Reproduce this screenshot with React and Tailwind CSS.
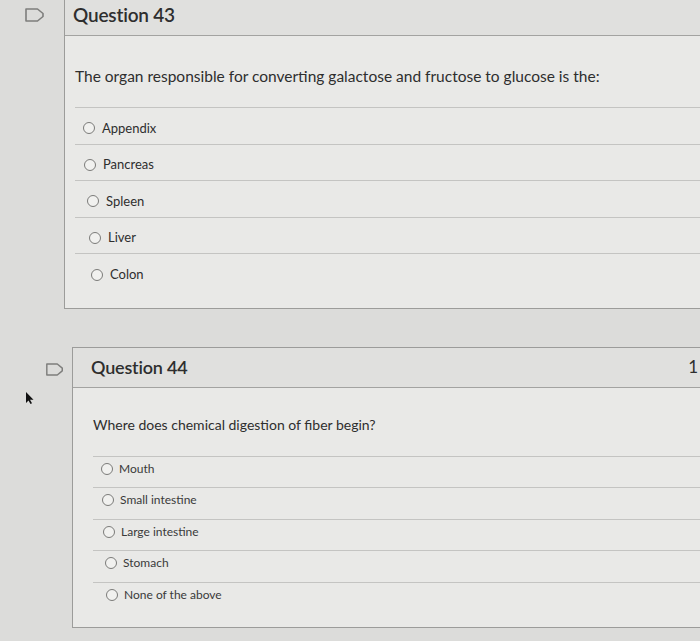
import React from 'react';

const Flag = ({ className }) => (
  <svg viewBox="0 0 22 16" className={className} fill="none">
    <path d="M2 2 H13.5 L19 6.5 V9.5 L13.5 14 H2 Z" stroke="#7e7e7c" strokeWidth="1.6" strokeLinejoin="round" />
  </svg>
);

const Radio = () => (
  <span className="inline-block w-[12px] h-[12px] rounded-full border border-[#7b7b79] bg-[#f1f1ef] shrink-0" />
);

const q43Options = [
  { label: 'Appendix', pad: 'pl-[8px]' },
  { label: 'Pancreas', pad: 'pl-[9px]' },
  { label: 'Spleen', pad: 'pl-[12px]' },
  { label: 'Liver', pad: 'pl-[14px]' },
  { label: 'Colon', pad: 'pl-[16px]' },
];

const q44Options = [
  { label: 'Mouth', pad: 'pl-[8px]' },
  { label: 'Small intestine', pad: 'pl-[9px]' },
  { label: 'Large intestine', pad: 'pl-[10px]' },
  { label: 'Stomach', pad: 'pl-[12px]' },
  { label: 'None of the above', pad: 'pl-[13px]' },
];

export default function App() {
  return (
    <div
      className="w-[700px] h-[641px] overflow-hidden bg-[#dcdcda] text-[#2e2e2e] relative"
      style={{ fontFamily: 'Lato, "Open Sans", sans-serif' }}
    >
      {/* Question 43 */}
      <div className="flex">
        <div className="w-[64px] shrink-0 pt-[7px] pl-[24px]">
          <Flag className="w-[22px] h-[16px]" />
        </div>
        <div className="flex-1 border-l border-b border-[#9c9c9a] bg-[#e9e9e7]">
          <div className="h-[36px] bg-[#e0e0de] border-b border-[#a3a3a1] pl-[8px] pt-[1px]">
            <span className="text-[19px] font-semibold tracking-[-0.2px]">Question 43</span>
          </div>
          <div className="pt-[30px] pl-[10px]">
            <p className="text-[15.5px] leading-[20px]">
              The organ responsible for converting galactose and fructose to glucose is the:
            </p>
            <div className="mt-[21px] border-t border-[#c4c4c2]" />
            <div className="pb-[17px]">
              {q43Options.map((o, i) => (
                <div
                  key={o.label}
                  className={`h-[36.5px] pt-[5px] flex items-center gap-[7px] ${o.pad} ${i < 4 ? 'border-b border-[#c4c4c2]' : ''}`}
                >
                  <Radio />
                  <span className="text-[13px]">{o.label}</span>
                </div>
              ))}
            </div>
          </div>
        </div>
      </div>

      {/* Question 44 */}
      <div className="flex mt-[38px]">
        <div className="w-[72px] shrink-0 pt-[15px] pl-[45px]">
          <Flag className="w-[20px] h-[15px]" />
        </div>
        <div className="flex-1 border-l border-t border-b border-[#9c9c9a] bg-[#e9e9e7]">
          <div className="h-[40px] bg-[#e0e0de] border-b border-[#a3a3a1] pl-[18px] pr-[2px] flex items-center justify-between">
            <span className="text-[18px] font-semibold tracking-[-0.2px]">Question 44</span>
            <span className="text-[17px]">1</span>
          </div>
          <div className="pt-[27px] pl-[20px]">
            <p className="text-[14px] leading-[20px]">Where does chemical digestion of fiber begin?</p>
            <div className="mt-[21px] border-t border-[#c4c4c2]" />
            <div className="pb-[13px]">
              {q44Options.map((o, i) => (
                <div
                  key={o.label}
                  className={`h-[31.5px] pt-[6px] flex items-start gap-[6px] ${o.pad} ${i < 4 ? 'border-b border-[#c4c4c2]' : ''}`}
                >
                  <Radio />
                  <span className="text-[12px] leading-[12px] text-[#3a3a3a]">{o.label}</span>
                </div>
              ))}
            </div>
          </div>
        </div>
      </div>

      {/* mouse pointer */}
      <svg className="absolute left-[25px] top-[391px] w-[10px] h-[14px]" viewBox="0 0 10 14">
        <path d="M1 1 L1 12 L3.5 9.5 L5.5 13 L7 12.3 L5 8.8 L8.5 8.8 Z" fill="#111" />
      </svg>
    </div>
  );
}
